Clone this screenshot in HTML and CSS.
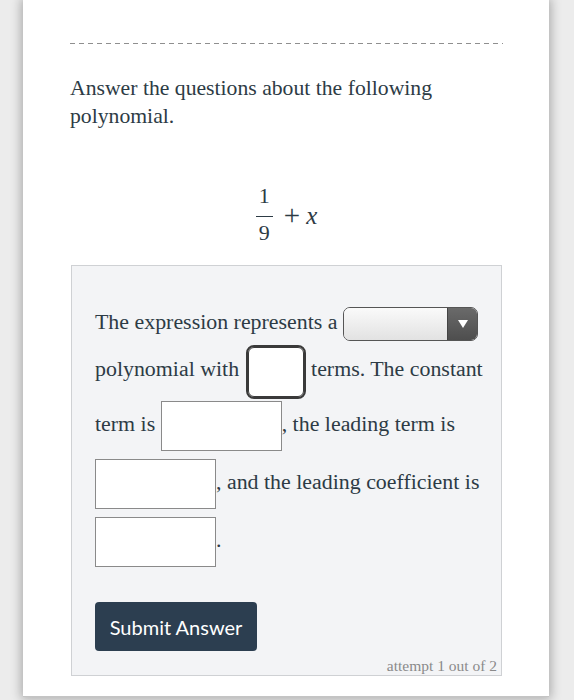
FILE: index.html
```html
<!DOCTYPE html>
<html>
<head>
<meta charset="utf-8">
<link rel="stylesheet" href="styles.css">
</head>
<body>
<div class="card">
  <div class="rule"></div>
  <p class="intro">Answer the questions about the following polynomial.</p>
  <div class="math">
    <span class="frac"><span class="num">1</span><span class="den">9</span></span>
    <span class="op">+</span>
    <span class="var">x</span>
  </div>
  <div class="panel">
    <p class="question">The expression represents a <span class="select"><span class="select-field"></span><span class="select-btn"><svg width="12" height="10" viewBox="0 0 12 10"><path d="M1 1 L11 1 L6 9 Z" fill="#fff"/></svg></span></span> polynomial with <span class="box focus"></span> terms. The constant term is <span class="box wide"></span>, the leading term is <span class="box wide"></span>, and the leading coefficient is <span class="box wide"></span>.</p>
    <button class="submit">Submit Answer</button>
    <div class="attempt">attempt 1 out of 2</div>
  </div>
</div>
</body>
</html>
```
FILE: styles.css
```css
html, body {
  margin: 0;
  padding: 0;
}
body {
  background: #ececec;
  font-family: "Liberation Serif", serif;
  color: #2d3b45;
  height: 700px;
  overflow: hidden;
}
.card {
  margin: 0 25px 0 23px;
  height: 697px;
  background: #fff;
  box-shadow: 0 0 10px 2px rgba(0, 0, 0, 0.28);
  border-bottom: 1px solid #c4c4c4;
  padding: 0 46px 0 47px;
  box-sizing: border-box;
  overflow: hidden;
}
.rule {
  margin-top: 43px;
  height: 1px;
  background: repeating-linear-gradient(90deg, #8f8f8f 0 5px, transparent 5px 9px);
}
.intro {
  margin: 30px 0 0 0;
  font-size: 21.7px;
  line-height: 28px;
  width: 390px;
}
.math {
  margin-top: 55px;
  font-family: "Liberation Serif", serif;
  font-size: 22px;
  display: flex;
  justify-content: center;
  align-items: center;
  gap: 7px;
  color: #2d3b45;
}
.frac {
  display: inline-flex;
  flex-direction: column;
  align-items: center;
  line-height: 1;
}
.num {
  border-bottom: 1px solid #2d3b45;
  padding: 0 3px 9px 3px;
}
.den {
  padding-top: 5px;
  margin-bottom: 3px;
}
.op {
  font-size: 29px;
  margin-left: 4px;
  margin-top: -2px;
}
.var {
  font-style: italic;
  font-size: 25px;
  margin-left: -1px;
}
.panel {
  margin-top: 18px;
  margin-left: 1px;
  width: 431px;
  height: 411px;
  box-sizing: border-box;
  background: #f3f4f6;
  border: 1px solid #cfd1d4;
  padding: 37px 4px 0 23px;
  display: flex;
  flex-direction: column;
  align-items: flex-start;
}
.question {
  margin: 0;
  font-size: 21.9px;
  line-height: 24px;
}
.select {
  display: inline-flex;
  vertical-align: middle;
  width: 135px;
  height: 34px;
  box-sizing: border-box;
  border: 1px solid #555;
  border-radius: 7px;
  overflow: hidden;
  margin: 4px 0;
}
.select-field {
  flex: 1;
  background: linear-gradient(#fafafa, #e2e2e2);
}
.select-btn {
  width: 29px;
  background: linear-gradient(#6a6a6a, #4e4e4e);
  border-left: 1px solid #444;
  display: flex;
  align-items: center;
  justify-content: center;
}
.box {
  display: inline-block;
  vertical-align: middle;
  background: #fff;
  border: 1px solid #8a8a8a;
  box-sizing: border-box;
  height: 50px;
  margin: 4px 0;
}
.box.wide {
  width: 121px;
}
.box.focus {
  width: 56px;
  height: 50px;
  margin: 2px 2px 0 3px;
  border: 1px solid #3a3a3a;
  outline: 2px solid #3a3a3a;
  border-radius: 6px;
}
.submit {
  margin-top: 31px;
  width: 162px;
  height: 50px;
  background: #2c3e50;
  color: #fff;
  border: none;
  border-radius: 4px;
  font-family: Lato, sans-serif;
  font-size: 20px;
  padding: 0;
}
.attempt {
  align-self: flex-end;
  margin-top: 6px;
  font-size: 15.5px;
  color: #8a8a8a;
}
```
